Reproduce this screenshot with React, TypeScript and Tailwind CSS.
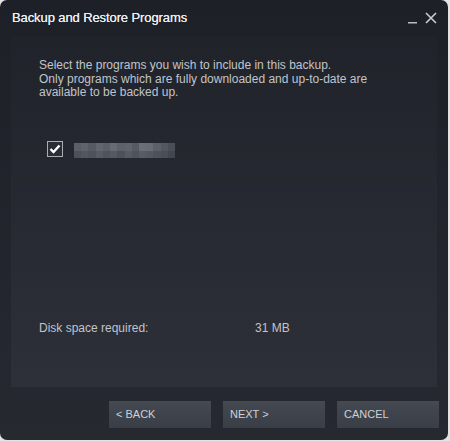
import React from 'react'

// Pixelated (blurred) program name, two rows of gray blocks
const topRow = ['#5a5e67', '#5f636c', '#565a63', '#62666f', '#5b5f68', '#676b74', '#5d616a', '#60646d', '#565a62', '#6a6e77', '#686c75', '#5c6069', '#53575f', '#4a4e56']
const bottomRow = ['#4c5058', '#52565e', '#4e525a', '#575b63', '#4f535b', '#555960', '#4d5159', '#565a62', '#4f535b', '#585c64', '#545860', '#4e525a', '#4a4e56', '#42464e']

const BlurredName = () => {
	return (
		<div className="flex flex-col w-[101px] h-[15px] overflow-hidden">
			<div className="flex h-[8px]">
				{topRow.map((c, i) => (
					<div key={i} className="flex-1" style={{ backgroundColor: c }} />
				))}
			</div>
			<div className="flex h-[7px]">
				{bottomRow.map((c, i) => (
					<div key={i} className="flex-1" style={{ backgroundColor: c }} />
				))}
			</div>
		</div>
	)
}

const DialogButton = ({ label }: { label: string }) => {
	return (
		<button
			className="w-[102px] h-[27px] pl-[7px] text-left text-[11px] text-[#cdd1d7] bg-gradient-to-b from-[#444952] to-[#3a3e46] cursor-pointer"
			type="button">
			<span>{label}</span>
		</button>
	)
}

const App = () => {
	return (
		<div
			className="w-[450px] h-[441px] bg-[#e4e4e4] overflow-hidden"
			style={{ fontFamily: '"Liberation Sans", Arial, sans-serif' }}>
			<div className="w-[448px] h-[440px] rounded-[7px] flex flex-col bg-gradient-to-b from-[#1d2027] to-[#262930] overflow-hidden">
				{/* Title bar */}
				<div className="h-[36px] flex items-center justify-between pl-[12px] pr-[11px]">
					<span className="text-[13px] text-[#eceef2] tracking-[-0.1px] [text-shadow:0_0_0.4px_#eceef2]">Backup and Restore Programs</span>
					<div className="flex items-center gap-[8px]">
						<svg width="9" height="12" viewBox="0 0 9 12">
							<rect x="0" y="10" width="9" height="1.5" fill="#b9bdc4" />
						</svg>
						<svg width="12" height="12" viewBox="0 0 12 12">
							<path d="M1 1 L11 11 M11 1 L1 11" stroke="#c9cdd3" strokeWidth="1.6" />
						</svg>
					</div>
				</div>

				{/* Content panel */}
				<div className="mx-[11px] h-[351px] bg-gradient-to-b from-[#20232a] to-[#2d3038] flex flex-col pl-[28px] pt-[23px]">
					<div className="text-[12px] leading-[13.5px] text-[#c0c4cb]">
						<p>Select the programs you wish to include in this backup.</p>
						<p>Only programs which are fully downloaded and up-to-date are</p>
						<p>available to be backed up.</p>
					</div>

					<div className="flex items-center mt-[41px] ml-[8px]">
						<div className="w-[16px] h-[16px] border border-[#a9adb4] bg-[#2a2d34] flex items-center justify-center">
							<svg width="12" height="10" viewBox="0 0 12 10">
								<path d="M1.5 5 L4.5 8 L10.5 1.5" fill="none" stroke="#ffffff" strokeWidth="2.4" />
							</svg>
						</div>
						<div className="ml-[11px] mt-[2px]">
							<BlurredName />
						</div>
					</div>

					<div className="flex mt-[161px] text-[12px] text-[#c0c4cb]">
						<span className="w-[216px]">Disk space required:</span>
						<span>31 MB</span>
					</div>
				</div>

				{/* Buttons */}
				<div className="flex justify-end gap-[12px] pr-[9px] pt-[14px]">
					<DialogButton label="< BACK" />
					<DialogButton label="NEXT >" />
					<DialogButton label="CANCEL" />
				</div>
			</div>
		</div>
	)
}

export default App
